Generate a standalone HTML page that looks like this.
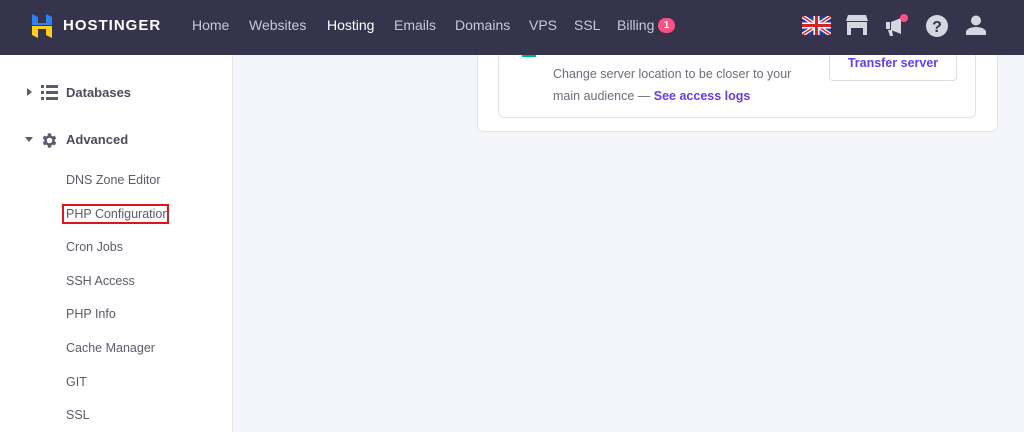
<!DOCTYPE html>
<html><head><meta charset="utf-8"><style>
*{margin:0;padding:0;box-sizing:border-box}
body{width:1024px;height:432px;overflow:hidden;background:#f4f4fb;font-family:"Liberation Sans",sans-serif;position:relative}
.top{position:absolute;left:0;top:0;width:1024px;height:55px;background:#36344d;z-index:5}
.logo{position:absolute;left:32px;top:14px}
.brand{position:absolute;left:63px;top:17px;color:#fff;font-weight:bold;font-size:15px;letter-spacing:1px}
.nav{position:absolute;top:17px;color:#c9c8d6;font-size:14px}
.side{position:absolute;left:0;top:55px;width:233px;height:377px;background:#fff;border-right:1px solid #e4e4ee}
.si{position:absolute;font-size:12.5px;color:#5b5b6b}
.sh{position:absolute;font-size:13px;color:#4b4b5e;font-weight:bold}
.card{position:absolute;left:477px;top:40px;width:521px;height:92px;background:#fff;border:1px solid #e2e2ec;border-top:none;border-radius:0 0 6px 6px}
.inner{position:absolute;left:20px;top:0;width:478px;height:78px;border:1px solid #e2e2ec;border-top:none;border-radius:0 0 6px 6px}
.txt{position:absolute;left:54px;top:23px;font-size:12.5px;color:#6d6d7c;line-height:22px}
.btn{position:absolute;left:330px;top:8px;width:128px;height:33px;border:1px solid #dcdce6;border-top:none;border-radius:0 0 4px 4px;color:#673de6;font-weight:bold;font-size:12.5px;text-align:center;line-height:30px}
</style></head><body>
<div class="top">
<svg class="logo" width="20" height="24" viewBox="0 0 20 24"><path d="M0 0l6 3v6h8V0l6 3v8H0z" fill="#2f7ff5"/><path d="M0 12h20v12l-6-3v-6H6v9l-6-3z" fill="#ffcd1e"/></svg>
<div class="brand">HOSTINGER</div>
<div class="nav" style="left:192px">Home</div>
<div class="nav" style="left:249px">Websites</div>
<div class="nav" style="left:327px;color:#fff">Hosting</div>
<div class="nav" style="left:394px">Emails</div>
<div class="nav" style="left:455px">Domains</div>
<div class="nav" style="left:529px">VPS</div>
<div class="nav" style="left:574px">SSL</div>
<div class="nav" style="left:617px">Billing</div>
<div style="position:absolute;left:658px;top:18px;width:17px;height:15px;border-radius:8px;background:#fc5185;color:#fff;font-size:10px;font-weight:bold;text-align:center;line-height:15px">1</div>
<svg style="position:absolute;left:802px;top:16px" width="29" height="19" viewBox="0 0 29 19"><rect width="29" height="19" fill="#2b3a8c"/><path d="M0 0L29 19M29 0L0 19" stroke="#fff" stroke-width="4"/><path d="M0 0L29 19M29 0L0 19" stroke="#d2232a" stroke-width="1.5"/><path d="M14.5 0v19M0 9.5h29" stroke="#fff" stroke-width="6"/><path d="M14.5 0v19M0 9.5h29" stroke="#d2232a" stroke-width="3"/></svg>
<svg style="position:absolute;left:846px;top:15px" width="22" height="20" viewBox="0 0 22 20"><path d="M2 0h18l2 6H0z M1 7h20v13h-4v-7H5v7H1z" fill="#d6d6e0"/></svg>
<svg style="position:absolute;left:885px;top:14px" width="24" height="23" viewBox="0 0 24 23"><path d="M1 8h4v7H1z M6 8l10-4v16L6 16z M3 16h4l1 6H5z" fill="#d6d6e0"/><circle cx="19" cy="4" r="4" fill="#fc5185"/></svg>
<svg style="position:absolute;left:925px;top:14px" width="24" height="24" viewBox="0 0 24 24"><circle cx="12" cy="12" r="11" fill="#d6d6e0"/><text x="12" y="18" font-size="16" font-weight="bold" text-anchor="middle" fill="#36344d" font-family="Liberation Sans">?</text></svg>
<svg style="position:absolute;left:966px;top:15px" width="20" height="20" viewBox="0 0 20 20"><circle cx="10" cy="5.5" r="5" fill="#d6d6e0"/><path d="M0 20v-3c0-3 5-5 10-5s10 2 10 5v3z" fill="#d6d6e0"/></svg>
</div>
<div class="side">
<svg style="position:absolute;left:27px;top:33px" width="5" height="8"><path d="M0 0l5 4-5 4z" fill="#5b5b6b"/></svg>
<svg style="position:absolute;left:41px;top:30px" width="17" height="15"><rect y="0" width="3" height="3" fill="#5b5b6b"/><rect x="5" y="0" width="12" height="3" fill="#5b5b6b"/><rect y="6" width="3" height="3" fill="#5b5b6b"/><rect x="5" y="6" width="12" height="3" fill="#5b5b6b"/><rect y="12" width="3" height="3" fill="#5b5b6b"/><rect x="5" y="12" width="12" height="3" fill="#5b5b6b"/></svg>
<div class="sh" style="left:66px;top:30px">Databases</div>
<svg style="position:absolute;left:25px;top:82px" width="8" height="5"><path d="M0 0h8l-4 5z" fill="#5b5b6b"/></svg>
<svg style="position:absolute;left:40px;top:76px" width="19" height="19" viewBox="0 0 24 24"><path fill="#5b5b6b" d="M19.4 13a7.5 7.5 0 000-2l2.1-1.6-2-3.5-2.5 1a7 7 0 00-1.7-1L15 3h-4l-.4 2.9a7 7 0 00-1.7 1l-2.5-1-2 3.5L6.6 11a7.5 7.5 0 000 2l-2.1 1.6 2 3.5 2.5-1a7 7 0 001.7 1L11 21h4l.4-2.9a7 7 0 001.7-1l2.5 1 2-3.5zM13 15.5a3.5 3.5 0 110-7 3.5 3.5 0 010 7z" transform="translate(-1 0)"/></svg>
<div class="sh" style="left:66px;top:77px">Advanced</div>
<div class="si" style="left:66px;top:118px">DNS Zone Editor</div>
<div style="position:absolute;left:62px;top:149px;width:107px;height:20px;border:2px solid #e0141e"></div>
<div class="si" style="left:66px;top:152px">PHP Configuration</div>
<div class="si" style="left:66px;top:185px">Cron Jobs</div>
<div class="si" style="left:66px;top:219px">SSH Access</div>
<div class="si" style="left:66px;top:252px">PHP Info</div>
<div class="si" style="left:66px;top:286px">Cache Manager</div>
<div class="si" style="left:66px;top:320px">GIT</div>
<div class="si" style="left:66px;top:353px">SSL</div>
</div>
<div class="card"><div class="inner">
<div style="position:absolute;left:23px;top:14px;width:14px;height:3px;background:#00b090"></div>
<div class="txt">Change server location to be closer to your<br>main audience — <b style="color:#673de6">See access logs</b></div>
<div class="btn">Transfer server</div>
</div></div>
</body></html>
